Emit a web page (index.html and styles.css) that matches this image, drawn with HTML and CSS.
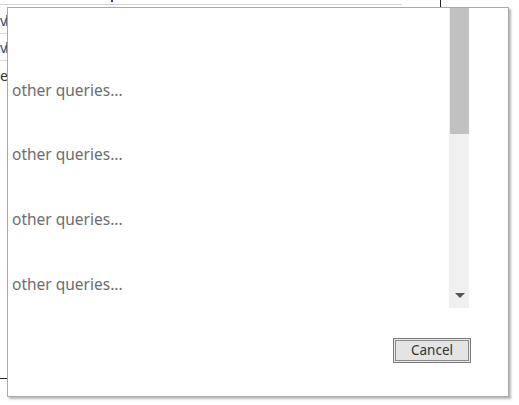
FILE: index.html
```html
<!DOCTYPE html>
<html>
<head>
<meta charset="utf-8">
<link rel="stylesheet" href="styles.css">
</head>
<body>
<div class="page">
  <div class="topbar">
    <div class="topline"></div>
    <div class="topmark"></div>
    <div class="topdivider"></div>
  </div>
  <div class="sidecol">
    <div class="siderow"><span class="sidetext link">vl</span></div>
    <div class="siderow"><span class="sidetext link">vl</span></div>
    <div class="siderow plain"><span class="sidetext">el</span></div>
    <div class="sidegap"></div>
    <div class="sideline"></div>
  </div>
</div>

<div class="dialog">
  <div class="listwrap">
    <div class="list">
      <div class="item">other queries...</div>
      <div class="item">other queries...</div>
      <div class="item">other queries...</div>
      <div class="item">other queries...</div>
    </div>
    <div class="scrollbar">
      <div class="thumb"></div>
      <div class="track"></div>
      <div class="arrow"><span class="tri"></span></div>
    </div>
  </div>
  <div class="buttons">
    <button class="btn"><span class="btn-inner">Cancel</span></button>
  </div>
</div>
</body>
</html>
```

FILE: styles.css
```css
html, body {
  margin: 0;
  padding: 0;
  background: #ffffff;
  width: 519px;
  height: 405px;
  overflow: hidden;
  font-family: "Noto Sans", "Open Sans", sans-serif;
}

.page {
  position: relative;
  width: 519px;
  height: 405px;
}

.topbar {
  position: relative;
  height: 7px;
}
.topline {
  position: absolute;
  left: 0;
  top: 4px;
  width: 402px;
  height: 1px;
  background: #d4d4d4;
}
.topmark {
  position: absolute;
  left: 111px;
  top: 0;
  width: 2px;
  height: 2px;
  background: #2b4f77;
}
.topdivider {
  position: absolute;
  left: 440px;
  top: 0;
  width: 1px;
  height: 8px;
  background: #222;
}

.sidecol {
  width: 60px;
  display: flex;
  flex-direction: column;
}
.siderow {
  height: 27px;
  border-bottom: 1px solid #d9d9d9;
  display: flex;
  align-items: center;
  padding-top: 2px;
  box-sizing: border-box;
}
.siderow.plain {
  border-bottom: none;
}
.sidetext {
  font-size: 14px;
  white-space: nowrap;
  color: #333;
  line-height: 1;
  letter-spacing: -2px;
}
.sidetext.link {
  color: #1f4f72;
}
.sidegap {
  height: 290px;
}
.sideline {
  width: 7px;
  height: 1px;
  background: #222;
}

.dialog {
  position: absolute;
  left: 7px;
  top: 7px;
  width: 500px;
  height: 388px;
  border: 1px solid #a9a9a9;
  background: #fff;
  box-shadow: 2px 2px 2px rgba(0, 0, 0, 0.28);
  display: flex;
  flex-direction: column;
}

.listwrap {
  display: flex;
  width: 461px;
  height: 300px;
}
.list {
  flex: 1;
  padding-top: 49.67px;
  padding-left: 4px;
  overflow: hidden;
}
.item {
  height: 64.67px;
  line-height: 64.67px;
  font-size: 15.5px;
  color: #6d6d6d;
  white-space: nowrap;
}

.scrollbar {
  width: 20px;
  background: #f0f0f0;
  display: flex;
  flex-direction: column;
}
.thumb {
  height: 126px;
  margin-left: 1px;
  background: #c1c1c1;
}
.track {
  flex: 1;
}
.arrow {
  height: 22px;
  display: flex;
  justify-content: center;
  align-items: center;
}
.tri {
  width: 0;
  height: 0;
  border-left: 5px solid transparent;
  border-right: 5px solid transparent;
  border-top: 5px solid #555;
  margin-left: 1px;
  margin-bottom: 4px;
}

.buttons {
  display: flex;
  justify-content: flex-end;
  width: 463px;
  padding-top: 30px;
}
.btn {
  width: 78px;
  height: 25px;
  padding: 1px;
  border: 1px solid #7a7a7a;
  background: #e9e9e9;
  margin: 0;
  display: flex;
  font-family: "Noto Sans", "Open Sans", sans-serif;
}
.btn-inner {
  flex: 1;
  border: 1px solid #8c8c8c;
  background: #e4e4e4;
  font-size: 13.5px;
  color: #333;
  display: flex;
  justify-content: center;
  align-items: center;
  line-height: 1;
}
```
